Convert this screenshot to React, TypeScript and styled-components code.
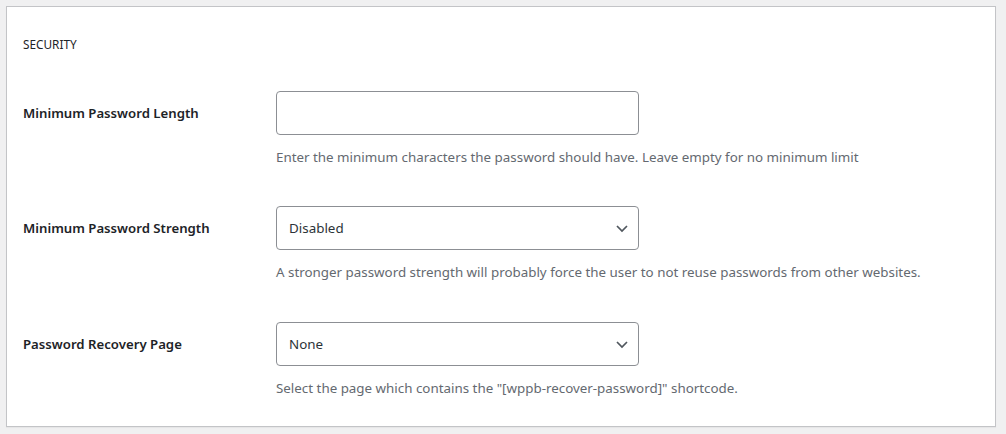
import React from "react";
import styled, { createGlobalStyle } from "styled-components";

const Global = createGlobalStyle`
  html, body { margin: 0; padding: 0; background: #f0f0f1; }
  body { padding: 6px; font-family: "Noto Sans", "Open Sans", sans-serif; color: #1d2327; }
  * { box-sizing: border-box; }
`;

const Card = styled.section`
  width: 990px;
  height: 421px;
  background: #fff;
  border: 1px solid #c3c4c7;
  box-shadow: 0 1px 1px rgba(0, 0, 0, 0.04);
  padding: 27px 16px 0 16px;
`;

const Title = styled.h3`
  margin: 0 0 37px 0;
  font-size: 11.8px;
  line-height: 20px;
  font-weight: 400;
  color: #1d2327;
  text-transform: uppercase;
`;

const Row = styled.div`
  display: grid;
  grid-template-columns: 253px 1fr;
  margin-bottom: 39px;
  &:last-of-type {
    padding-top: 1px;
  }
`;

const Label = styled.label`
  font-size: 13.2px;
  font-weight: 600;
  line-height: 44px;
  color: #1d2327;
`;

const Field = styled.div`
  display: flex;
  flex-direction: column;
`;

const Control = styled.div`
  position: relative;
  width: 363px;
  height: 44px;
  border: 1px solid #8c8f94;
  border-radius: 4px;
  background: #fff;
  display: flex;
  align-items: center;
  padding: 0 12px;
  font-size: 13.4px;
  color: #2c3338;
`;

const Chevron = styled.svg`
  position: absolute;
  right: 9px;
  top: 50%;
  transform: translateY(-50%);
`;

const Help = styled.p`
  margin: 12px 0 0 0;
  font-size: 13.37px;
  line-height: 20px;
  color: #646970;
`;

const Arrow = () => (
  <Chevron width="14" height="14" viewBox="0 0 14 14">
    <path d="M2 5 L7 10 L12 5" fill="none" stroke="#50575e" strokeWidth="1.7" />
  </Chevron>
);

const rows = [
  {
    label: "Minimum Password Length",
    value: "",
    select: false,
    help: "Enter the minimum characters the password should have. Leave empty for no minimum limit",
  },
  {
    label: "Minimum Password Strength",
    value: "Disabled",
    select: true,
    help: "A stronger password strength will probably force the user to not reuse passwords from other websites.",
  },
  {
    label: "Password Recovery Page",
    value: "None",
    select: true,
    help: 'Select the page which contains the "[wppb-recover-password]" shortcode.',
  },
];

export default function App() {
  return (
    <>
      <Global />
      <Card>
        <Title>Security</Title>
        {rows.map((r) => (
          <Row key={r.label}>
            <Label>{r.label}</Label>
            <Field>
              <Control>
                {r.value}
                {r.select && <Arrow />}
              </Control>
              <Help>{r.help}</Help>
            </Field>
          </Row>
        ))}
      </Card>
    </>
  );
}
